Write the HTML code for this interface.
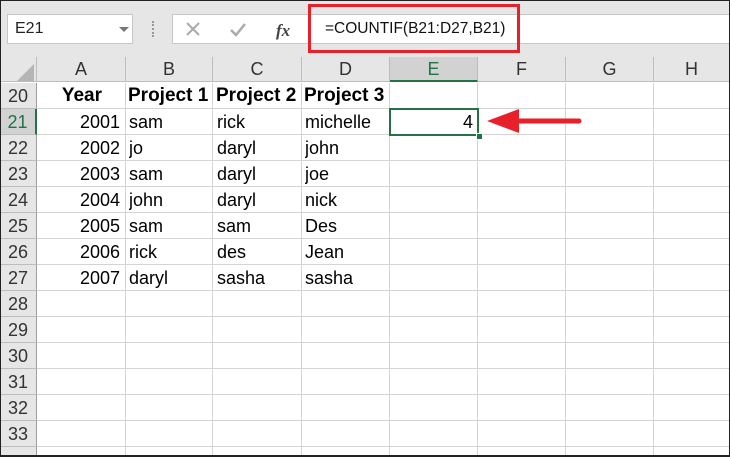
<!DOCTYPE html>
<html><head><style>
*{margin:0;padding:0;box-sizing:border-box}
html,body{width:730px;height:457px;overflow:hidden}
body{background:#fff;font-family:"Liberation Sans",Calibri,sans-serif;position:relative}
.frame{position:absolute;left:0;top:0;width:730px;height:457px;border:1px solid #222;border-bottom:2px solid #222;pointer-events:none;z-index:20}
.tb{position:absolute;left:0;top:0;width:730px;height:57px;background:#e6e6e6}
.nb{position:absolute;left:7px;top:14px;width:126px;height:30px;background:#fff;border:1px solid #c6c6c6;font-size:16px;line-height:28px;padding-left:7px;color:#222}
.fb{position:absolute;left:172px;top:14px;width:558px;height:30px;background:#fff;border:1px solid #c6c6c6}
.red{position:absolute;left:308px;top:4px;width:212px;height:49px;border:3px solid #e8202a;z-index:5}
.ftxt{position:absolute;left:325px;top:14px;font-size:15.5px;line-height:30px;color:#111;z-index:6}
.cell{position:absolute;font-size:18px;line-height:26px;color:#000;white-space:nowrap;overflow:hidden}
.h{position:absolute;top:57px;height:25px;background:#e6e6e6;border-right:1px solid #bdbdbd;border-bottom:1px solid #bdbdbd;text-align:center;font-size:18px;line-height:25px;color:#333}
.r{position:absolute;left:0;width:37px;height:26px;background:#e6e6e6;border-bottom:1px solid #bdbdbd;border-right:1px solid #9e9e9e;text-align:center;font-size:18px;line-height:26px;color:#333;overflow:hidden}
.hl{position:absolute;left:37px;width:693px;height:1px;background:#d4d4d4}
.vl{position:absolute;top:83px;width:1px;height:374px;background:#d4d4d4}
.clip{position:absolute;left:0;top:0;width:730px;height:457px;overflow:hidden}
</style></head><body><div class="clip">
<div class="tb"></div>
<div class="nb">E21<span style="position:absolute;left:111px;top:12px;border-left:5px solid transparent;border-right:5px solid transparent;border-top:5px solid #777"></span></div>
<div style="position:absolute;left:152px;top:21px;width:2px;height:16px;border-left:2px dotted #999"></div>
<div class="fb">
<svg width="140" height="30" style="position:absolute;left:0;top:0">
<path d="M14 8 L26 20 M26 8 L14 20" stroke="#aaa" stroke-width="2"/>
<path d="M58 15 L63 20 L72 9" stroke="#aaa" stroke-width="2.5" fill="none"/>
<text x="103" y="21" font-family="Liberation Serif" font-style="italic" font-weight="bold" font-size="17" fill="#444">fx</text>
</svg></div>
<div class="red"></div>
<div class="ftxt">=COUNTIF(B21:D27,B21)</div>

<div class="h" style="left:0;width:37px"><svg width="30" height="22" style="position:absolute;left:4px;top:2px"><path d="M30 5 L30 22 L13 22 Z" fill="#b5b5b5"/></svg></div>
<div class="h" style="left:37px;width:89px">A</div>
<div class="h" style="left:126px;width:87px">B</div>
<div class="h" style="left:213px;width:89px">C</div>
<div class="h" style="left:302px;width:88px">D</div>
<div class="h" style="left:390px;width:88px;background:#d2d2d2;border-bottom:2px solid #217346;color:#217346">E</div>
<div class="h" style="left:478px;width:88px">F</div>
<div class="h" style="left:566px;width:88px">G</div>
<div class="h" style="left:654px;width:76px">H</div>

<div class="r" style="top:83px">20</div>
<div class="r" style="top:109px;background:#d2d2d2;color:#217346;border-right:2px solid #217346">21</div>
<div class="r" style="top:135px">22</div>
<div class="r" style="top:161px">23</div>
<div class="r" style="top:187px">24</div>
<div class="r" style="top:213px">25</div>
<div class="r" style="top:239px">26</div>
<div class="r" style="top:265px">27</div>
<div class="r" style="top:291px">28</div>
<div class="r" style="top:317px">29</div>
<div class="r" style="top:343px">30</div>
<div class="r" style="top:369px">31</div>
<div class="r" style="top:395px">32</div>
<div class="r" style="top:421px">33</div>
<div class="r" style="top:447px;height:10px;border-bottom:none"></div>

<div class="hl" style="top:108px"></div><div class="hl" style="top:134px"></div><div class="hl" style="top:160px"></div><div class="hl" style="top:186px"></div><div class="hl" style="top:212px"></div><div class="hl" style="top:238px"></div><div class="hl" style="top:264px"></div><div class="hl" style="top:290px"></div><div class="hl" style="top:316px"></div><div class="hl" style="top:342px"></div><div class="hl" style="top:368px"></div><div class="hl" style="top:394px"></div><div class="hl" style="top:420px"></div><div class="hl" style="top:446px"></div>
<div class="vl" style="left:125px"></div><div class="vl" style="left:212px"></div><div class="vl" style="left:301px"></div><div class="vl" style="left:389px"></div><div class="vl" style="left:477px"></div><div class="vl" style="left:565px"></div><div class="vl" style="left:653px"></div>

<div style="font-weight:bold">
<div class="cell" style="left:37px;width:87px;top:83px;text-align:right;padding-right:22px;font-size:19px">Year</div>
<div class="cell" style="left:128px;top:83px;font-size:19px">Project 1</div>
<div class="cell" style="left:216px;top:83px;font-size:19px">Project 2</div>
<div class="cell" style="left:304px;top:83px;font-size:19px">Project 3</div>
</div>
<div class="cell" style="left:37px;width:87px;top:109px;text-align:right;padding-right:4px">2001</div>
<div class="cell" style="left:37px;width:87px;top:135px;text-align:right;padding-right:4px">2002</div>
<div class="cell" style="left:37px;width:87px;top:161px;text-align:right;padding-right:4px">2003</div>
<div class="cell" style="left:37px;width:87px;top:187px;text-align:right;padding-right:4px">2004</div>
<div class="cell" style="left:37px;width:87px;top:213px;text-align:right;padding-right:4px">2005</div>
<div class="cell" style="left:37px;width:87px;top:239px;text-align:right;padding-right:4px">2006</div>
<div class="cell" style="left:37px;width:87px;top:265px;text-align:right;padding-right:4px">2007</div>

<div class="cell" style="left:129px;top:109px">sam</div><div class="cell" style="left:217px;top:109px">rick</div><div class="cell" style="left:305px;top:109px">michelle</div>
<div class="cell" style="left:129px;top:135px">jo</div><div class="cell" style="left:217px;top:135px">daryl</div><div class="cell" style="left:305px;top:135px">john</div>
<div class="cell" style="left:129px;top:161px">sam</div><div class="cell" style="left:217px;top:161px">daryl</div><div class="cell" style="left:305px;top:161px">joe</div>
<div class="cell" style="left:129px;top:187px">john</div><div class="cell" style="left:217px;top:187px">daryl</div><div class="cell" style="left:305px;top:187px">nick</div>
<div class="cell" style="left:129px;top:213px">sam</div><div class="cell" style="left:217px;top:213px">sam</div><div class="cell" style="left:305px;top:213px">Des</div>
<div class="cell" style="left:129px;top:239px">rick</div><div class="cell" style="left:217px;top:239px">des</div><div class="cell" style="left:305px;top:239px">Jean</div>
<div class="cell" style="left:129px;top:265px">daryl</div><div class="cell" style="left:217px;top:265px">sasha</div><div class="cell" style="left:305px;top:265px">sasha</div>

<div style="position:absolute;left:389px;top:108px;width:90px;height:28px;border:2px solid #217346"></div>
<div style="position:absolute;left:476px;top:133px;width:5px;height:5px;background:#217346;border:1px solid #fff;box-sizing:content-box"></div>
<div class="cell" style="left:390px;width:86px;top:109px;text-align:right;padding-right:3px">4</div>

<svg style="position:absolute;left:485px;top:105px" width="100" height="32">
<path d="M2 16 L34 4 L34 28 Z" fill="#e8202a"/>
<path d="M32 16 L94 16" stroke="#e8202a" stroke-width="5" stroke-linecap="round"/>
</svg>
<div class="frame"></div>
</div></body></html>
